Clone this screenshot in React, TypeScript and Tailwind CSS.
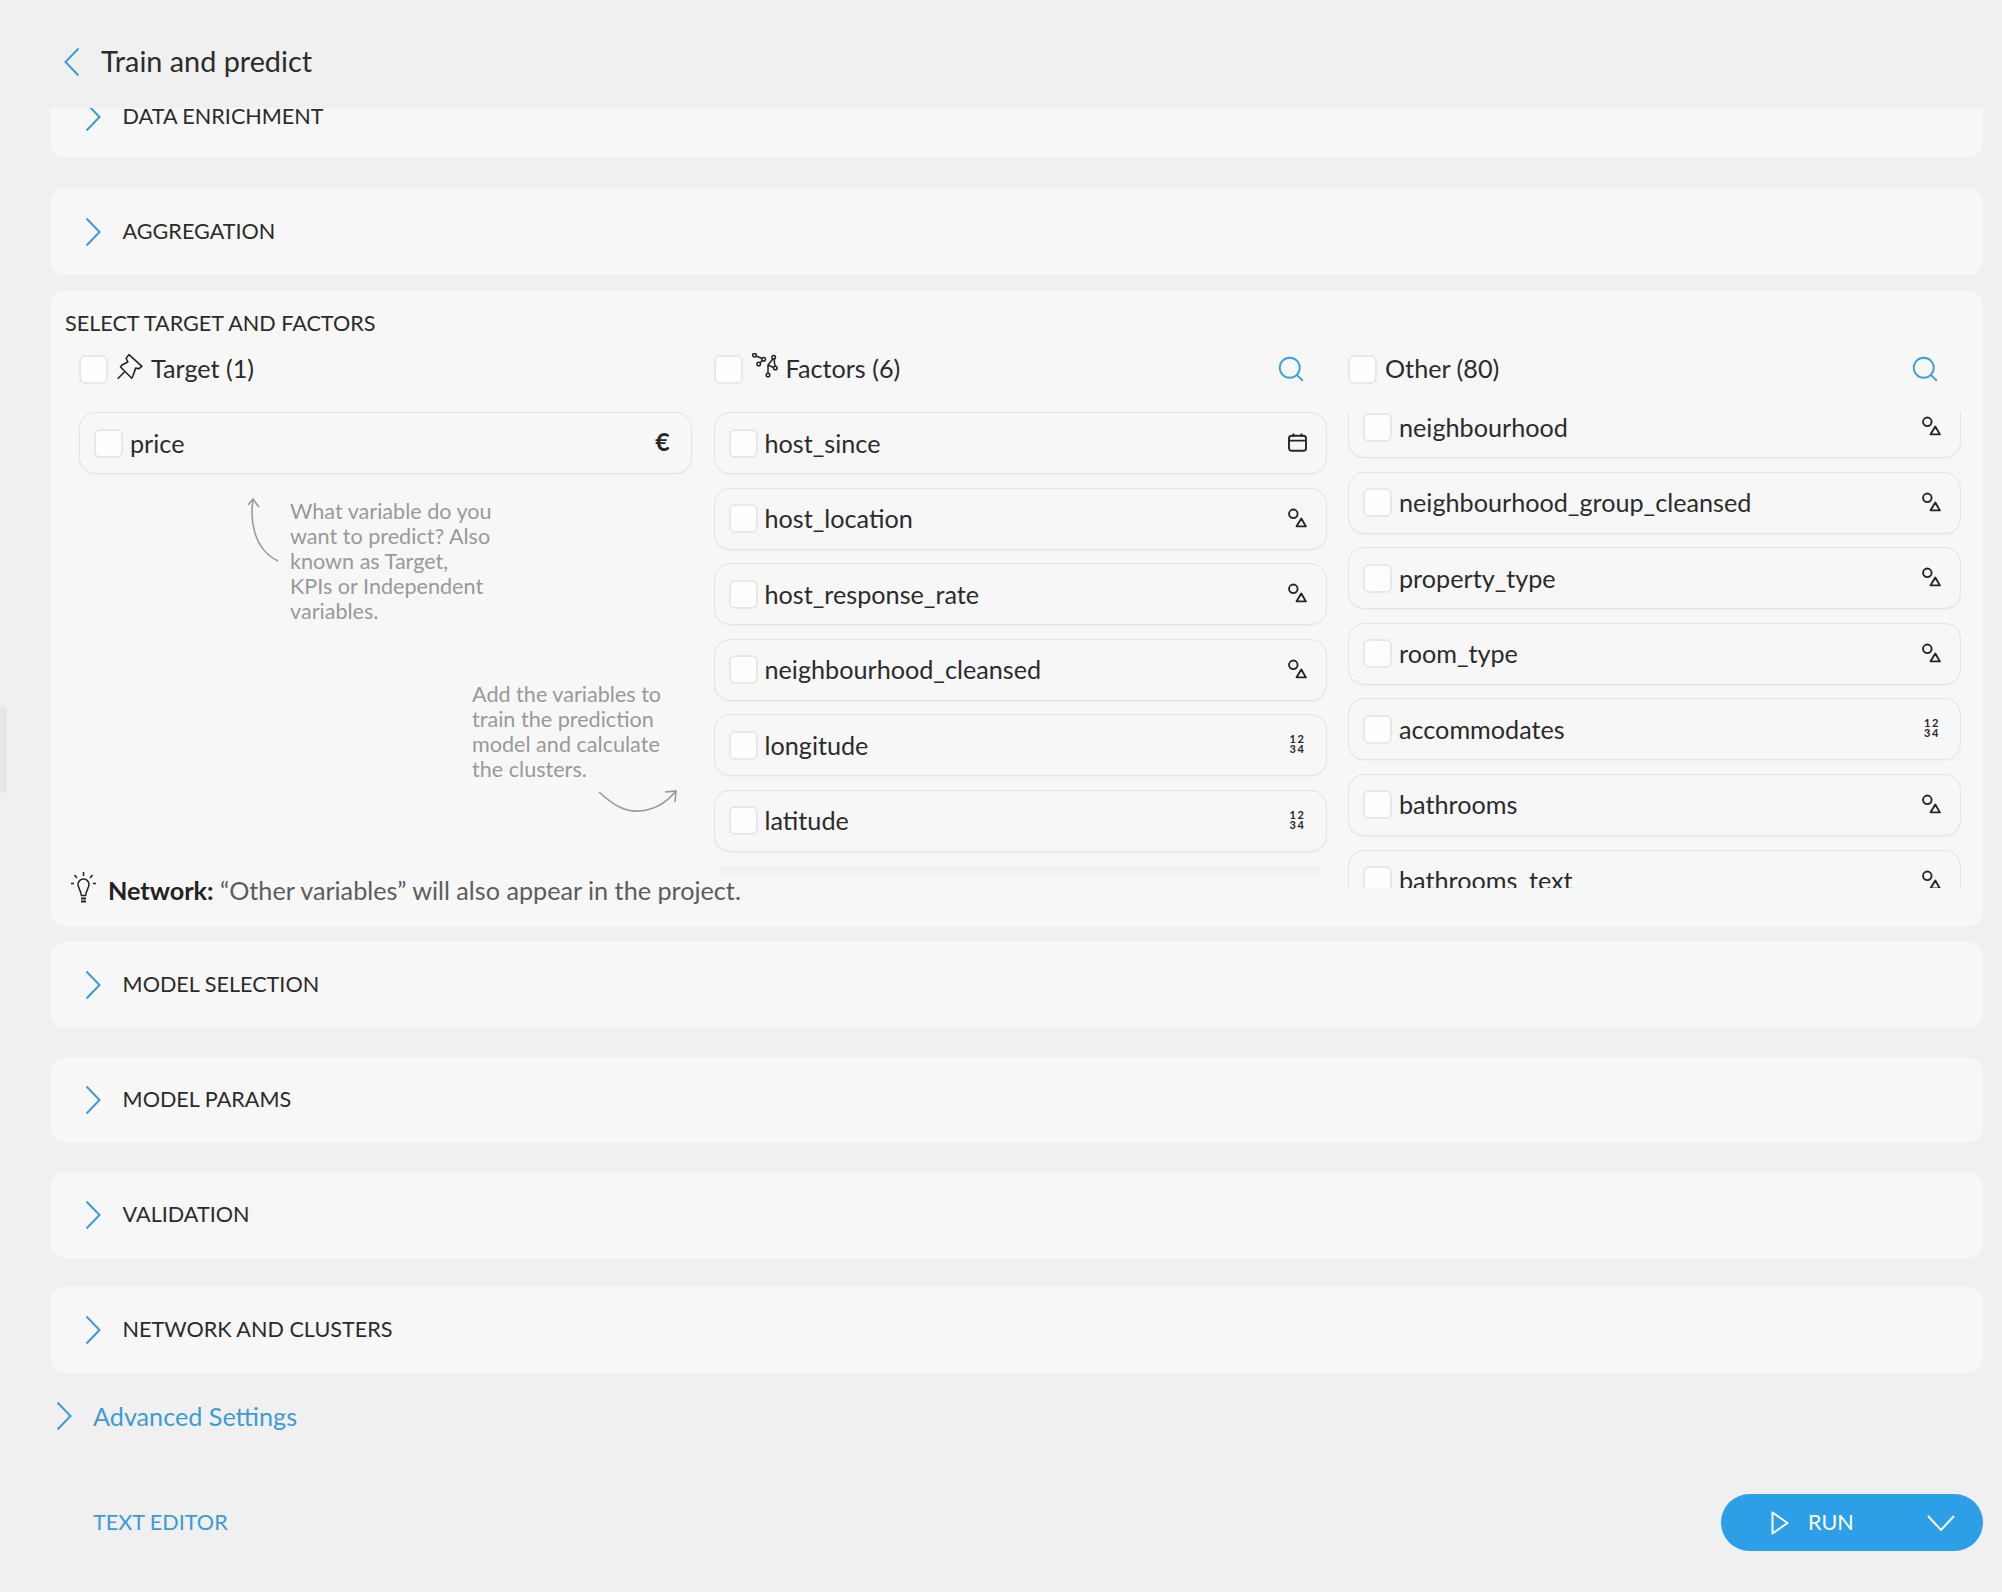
import React from 'react';
import { Search } from 'lucide-react';

const ChevronRight: React.FC = () => (
  <svg width="16" height="30" viewBox="0 0 16 30" fill="none" stroke="#3d9bd6" strokeWidth="2" className="shrink-0">
    <path d="M1.5 1.5 14.5 15 1.5 28.5" />
  </svg>
);

const ShapesIcon: React.FC = () => (
  <svg width="20" height="20" viewBox="0 0 20 20" fill="none" stroke="#262626" strokeWidth="2">
    <circle cx="5.6" cy="5.6" r="4.5" />
    <path d="M9 18.800 14 10.500l4.800 8.300Z" strokeLinejoin="round" />
  </svg>
);

const CalendarIcon: React.FC = () => (
  <svg width="19" height="19" viewBox="0 0 19 19" fill="none" stroke="#262626" strokeWidth="1.9">
    <rect x="1" y="2.8" width="17" height="15" rx="2.6" />
    <path d="M1 7.6h17M5.5 0.6v3.4M13.5 0.6v3.4" />
  </svg>
);

const NumbersIcon: React.FC = () => (
  <div className="w-[19px] pl-[1px] text-center text-[11px] leading-[10px] font-bold tracking-[1.6px] text-[#262626]">
    12
    <br />
    34
  </div>
);

const EuroIcon: React.FC = () => (
  <span className="mb-[2px] w-[19px] text-center text-[25px] leading-[21px] font-bold text-[#262626]">€</span>
);

const Checkbox: React.FC = () => (
  <div className="h-[29px] w-[29px] shrink-0 rounded-[6px] border-2 border-[#e8e8e8] bg-[#fdfdfd]" />
);

interface RowProps {
  name: string;
  icon: React.ReactNode;
}

const VariableRow: React.FC<RowProps> = ({ name, icon }) => (
  <div className="flex h-[62px] shrink-0 items-center rounded-[16px] border border-[#e4e4e4] bg-[#f7f7f7] pr-[19px] pl-[14px] shadow-[0_1px_2px_rgba(0,0,0,0.03)]">
    <Checkbox />
    <span className="mb-[1px] ml-[7px] flex-1 text-[25.2px] leading-[32px] text-[#2b2b2b]">{name}</span>
    <div className="mb-[2px] flex h-[20px] w-[19px] items-center justify-center">{icon}</div>
  </div>
);

interface ColumnHeaderProps {
  label: string;
  icon?: React.ReactNode;
  search?: boolean;
}

const ColumnHeader: React.FC<ColumnHeaderProps> = ({ label, icon, search }) => (
  <div className="mb-[29px] flex h-[28px] items-center">
    <Checkbox />
    {icon}
    <span className="mb-[2px] ml-[8px] flex-1 text-[25.2px] leading-[32px] text-[#2b2b2b]">{label}</span>
    {search && <Search size={30} strokeWidth={1.5} className="mr-[21px] text-[#3d9fd9]" />}
  </div>
);

const AccordionCard: React.FC<{ title: string; className?: string }> = ({ title, className }) => (
  <div className={`flex h-[86px] shrink-0 items-center gap-[21.6px] rounded-[16px] bg-[#f7f7f7] pl-[35px] ${className ?? ''}`}>
    <ChevronRight />
    <span className="mb-[2px] text-[21.6px] leading-[28px] text-[#2b2b2b]">{title}</span>
  </div>
);

const factors: RowProps[] = [
  { name: 'host_since', icon: <CalendarIcon /> },
  { name: 'host_location', icon: <ShapesIcon /> },
  { name: 'host_response_rate', icon: <ShapesIcon /> },
  { name: 'neighbourhood_cleansed', icon: <ShapesIcon /> },
  { name: 'longitude', icon: <NumbersIcon /> },
  { name: 'latitude', icon: <NumbersIcon /> },
];

const others: RowProps[] = [
  { name: 'neighbourhood', icon: <ShapesIcon /> },
  { name: 'neighbourhood_group_cleansed', icon: <ShapesIcon /> },
  { name: 'property_type', icon: <ShapesIcon /> },
  { name: 'room_type', icon: <ShapesIcon /> },
  { name: 'accommodates', icon: <NumbersIcon /> },
  { name: 'bathrooms', icon: <ShapesIcon /> },
  { name: 'bathrooms_text', icon: <ShapesIcon /> },
];

export default function App() {
  return (
    <div className="relative h-[1592px] overflow-hidden bg-[#f0f0f0] font-['Lato',sans-serif]">
      {/* scroll handle */}
      <div className="absolute top-[707px] left-0 h-[86px] w-[7px] rounded-r-[4px] bg-[#e6e6e6]" />

      <div className="flex h-[108px] items-start pt-[47px] pl-[64px]">
        <svg width="16" height="30" viewBox="0 0 16 30" fill="none" stroke="#3d9bd6" strokeWidth="2">
          <path d="M14.5 1.5 1.5 15 14.5 28.5" />
        </svg>
        <h1 className="ml-[21px] text-[28.8px] leading-[28px] font-normal text-[#2b2b2b]">Train and predict</h1>
      </div>

      <div className="h-[1340px] overflow-hidden pr-[19px] pl-[50px]">
        <AccordionCard title="DATA ENRICHMENT" className="-mt-[36px] pt-[4px]" />
        <AccordionCard title="AGGREGATION" className="mt-[30px] h-[87px]" />

        <section className="mt-[15px] h-[637px] rounded-[16px] bg-[#f7f7f7] pt-[20px] pl-[15px]">
          <h2 className="text-[21.6px] leading-[26px] font-normal text-[#2b2b2b]">SELECT TARGET AND FACTORS</h2>
          <div className="mt-[19px] grid grid-cols-[613px_613px_613px] gap-x-[21.5px] pl-[14px]">
            <div className="h-[533px]">
              <ColumnHeader
                label="Target (1)"
                icon={
                  <svg width="27" height="28" viewBox="0 0 24 24" fill="none" stroke="#222" strokeWidth="1.4" strokeLinejoin="round" className="mb-[4px] ml-[8px] shrink-0">
                    <path d="M11.500 1 23 11.500 20.500 13.500 17.500 13 15 20 14 22 4 12 5 10.500 10.500 7.500 9 4.200Z" />
                    <path d="M7.500 16.500 1.500 22.500" />
                  </svg>
                }
              />
              <VariableRow name="price" icon={<EuroIcon />} />
              <div className="relative mt-[25px] ml-[211px] w-[205px] text-[21.6px] leading-[25px] text-[#999999]">
                <svg width="34" height="66" viewBox="0 0 34 66" fill="none" stroke="#999" strokeWidth="1.6" className="absolute top-[-2px] left-[-44px]">
                  <path d="M7 3C4 22 7 52 32 64" />
                  <path d="M2 8 7 2l6 8" />
                </svg>
                What variable do you want to predict? Also known as Target, KPIs or Independent variables.
              </div>
              <div className="relative mt-[58px] ml-[393px] w-[200px] text-[21.6px] leading-[25px] text-[#999999]">
                Add the variables to train the prediction model and calculate the clusters.
                <svg width="80" height="24" viewBox="0 0 80 24" fill="none" stroke="#999" strokeWidth="1.6" className="absolute top-[107px] left-[126px]">
                  <path d="M1 3c14 13 26 20 40 19C57 21 68 14 77 3" />
                  <path d="M67 3 78 2l-1 11" />
                </svg>
              </div>
            </div>

            <div>
              <ColumnHeader
                label="Factors (6)"
                search
                icon={
                  <svg width="26" height="26" viewBox="0 0 26 26" fill="none" stroke="#222" strokeWidth="1.5" className="mb-[6px] ml-[9px] shrink-0">
                    <circle cx="2.5" cy="2.2" r="1.8" />
                    <circle cx="11.700" cy="6.300" r="1.8" />
                    <circle cx="6.700" cy="11" r="1.8" />
                    <circle cx="21.700" cy="4.300" r="1.8" />
                    <circle cx="23.300" cy="15" r="1.8" />
                    <circle cx="16" cy="22" r="1.8" />
                    <path d="M4.200 3 10 5.500M10.300 7.500 8.100 9.800M22 6.100 23 13.200M20.800 6 16 12v8.200M16 12 21.600 14.500" />
                  </svg>
                }
              />
              <div className="flex h-[476px] flex-col gap-[13.6px] overflow-hidden">
                {factors.map((r) => (
                  <VariableRow key={r.name} {...r} />
                ))}
                <div className="mx-[4px] h-[12px] shrink-0 rounded-t-[8px] bg-gradient-to-b from-[#efefef] to-[#f7f7f7]" />
              </div>
            </div>

            <div>
              <ColumnHeader label="Other (80)" search />
              <div className="h-[476px] overflow-hidden">
                <div className="-mt-[16px] flex flex-col gap-[13.6px]">
                  {others.map((r) => (
                    <VariableRow key={r.name} {...r} />
                  ))}
                </div>
              </div>
            </div>
          </div>

          <div className="-mt-[14px] flex h-[32px] items-center pl-[5px]">
            <svg width="27" height="32" viewBox="0 0 27 32" fill="none" stroke="#222" strokeWidth="1.5" className="mb-[7px] shrink-0">
              <path d="M13.500 1v4M4.500 4l2.500 3M22.500 4 20 7M1 12.500h3M23 12.500h3" />
              <path d="M8 13.500a5.500 5.500 0 1 1 11 0c0 3-2.600 5.200-3.400 11h-4.200C10.600 18.700 8 16.500 8 13.500Z" />
              <path d="M11 27.500h5M11 30.500h5" strokeWidth="2" />
            </svg>
            <p className="ml-[11px] text-[25.2px] leading-[32px] text-[#5c5c5c]">
              <span className="font-bold text-[#222222]">Network:</span> “Other variables” will also appear in the project.
            </p>
          </div>
        </section>

        <div className="mt-[15px] flex flex-col gap-[29px]">
          <AccordionCard title="MODEL SELECTION" />
          <AccordionCard title="MODEL PARAMS" />
          <AccordionCard title="VALIDATION" />
          <AccordionCard title="NETWORK AND CLUSTERS" />
        </div>

        <div className="mt-[27px] flex items-center gap-[21px] pl-[6px]">
          <ChevronRight />
          <span className="text-[25.2px] leading-[32px] text-[#3d9bd6]">Advanced Settings</span>
        </div>
      </div>

      <div className="mt-[46px] flex items-center justify-between pr-[19px] pl-[93px]">
        <span className="mb-[2px] text-[21.6px] leading-[28px] text-[#3d9bd6]">TEXT EDITOR</span>
        <button className="flex h-[57px] w-[262px] items-center rounded-full bg-[#2d9fe6] pl-[50px] text-white">
          <svg width="18" height="24" viewBox="0 0 18 24" fill="none" stroke="#fff" strokeWidth="2" strokeLinejoin="round">
            <path d="M1.500 1.500 16.500 12 1.500 22.500Z" />
          </svg>
          <span className="mb-[2px] ml-[19px] text-[21.6px] leading-[28px]">RUN</span>
          <svg width="28" height="16" viewBox="0 0 28 16" fill="none" stroke="#fff" strokeWidth="2" className="mr-[28px] ml-auto">
            <path d="M1 1 14 15 27 1" />
          </svg>
        </button>
      </div>
    </div>
  );
}
